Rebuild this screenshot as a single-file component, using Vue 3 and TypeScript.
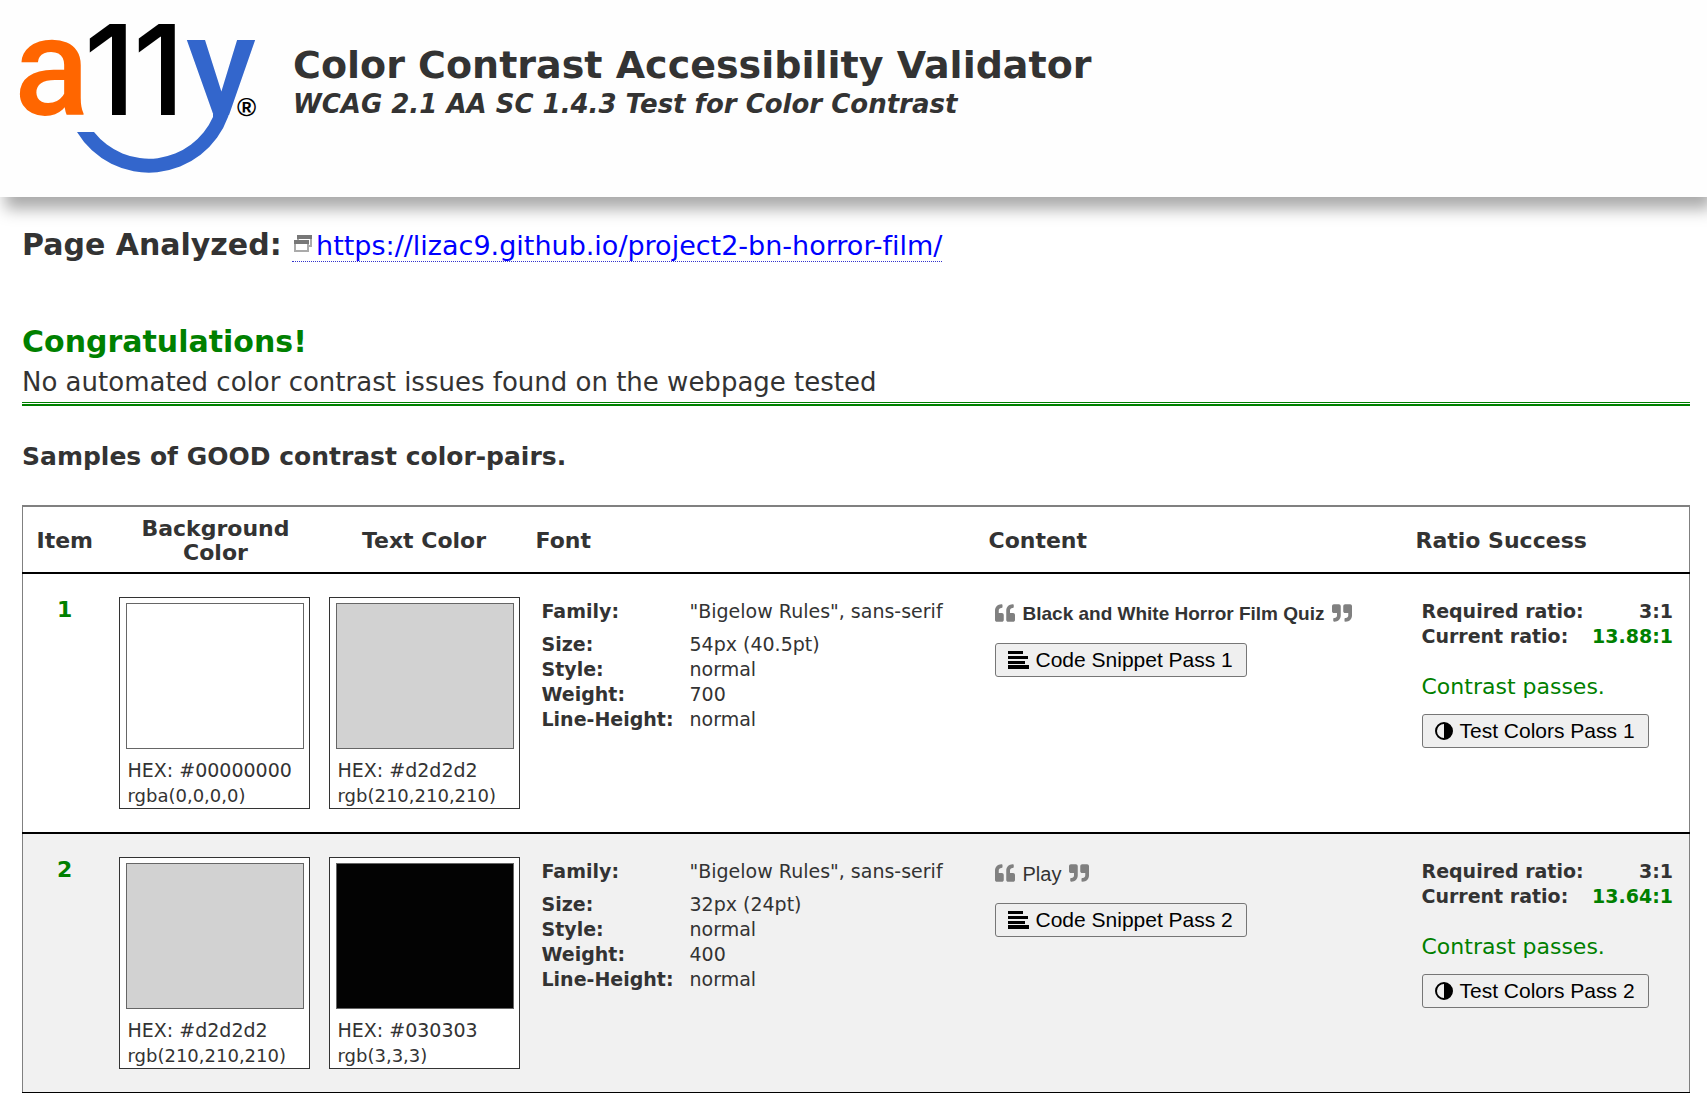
<script setup lang="ts">
interface Swatch {
  hex: string
  value: string
}

interface Sample {
  id: number
  background: Swatch
  text: Swatch
  family: string
  size: string
  style: string
  weight: string
  lineHeight: string
  content: string
  bold: boolean
  required: string
  current: string
}

const pageUrl = 'https://lizac9.github.io/project2-bn-horror-film/'

const samples: Sample[] = [
  {
    id: 1,
    background: { hex: '#00000000', value: 'rgba(0,0,0,0)' },
    text: { hex: '#d2d2d2', value: 'rgb(210,210,210)' },
    family: '"Bigelow Rules", sans-serif',
    size: '54px (40.5pt)',
    style: 'normal',
    weight: '700',
    lineHeight: 'normal',
    content: 'Black and White Horror Film Quiz',
    bold: true,
    required: '3:1',
    current: '13.88:1',
  },
  {
    id: 2,
    background: { hex: '#d2d2d2', value: 'rgb(210,210,210)' },
    text: { hex: '#030303', value: 'rgb(3,3,3)' },
    family: '"Bigelow Rules", sans-serif',
    size: '32px (24pt)',
    style: 'normal',
    weight: '400',
    lineHeight: 'normal',
    content: 'Play',
    bold: false,
    required: '3:1',
    current: '13.64:1',
  },
]

const swatches = (s: Sample): Swatch[] => [s.background, s.text]

const fontRows = (s: Sample): [string, string][] => [
  ['Family:', s.family],
  ['Size:', s.size],
  ['Style:', s.style],
  ['Weight:', s.weight],
  ['Line-Height:', s.lineHeight],
]

const quotePath =
  'M464 256h-80v-64c0-35.3 28.7-64 64-64h8c13.3 0 24-10.7 24-24V56c0-13.3-10.7-24-24-24h-8c-88.4 0-160 71.6-160 160v240c0 26.5 21.5 48 48 48h128c26.5 0 48-21.5 48-48V304c0-26.5-21.5-48-48-48zm-288 0H96v-64c0-35.3 28.7-64 64-64h8c13.3 0 24-10.7 24-24V56c0-13.3-10.7-24-24-24h-8C71.6 32 0 103.6 0 192v240c0 26.5 21.5 48 48 48h128c26.5 0 48-21.5 48-48V304c0-26.5-21.5-48-48-48z'
</script>

<template>
  <div class="page">
    <header class="banner">
      <svg class="logo" viewBox="0 0 240 152" role="img" aria-label="a11y">
        <defs>
          <clipPath id="above-smile"><rect x="160" y="0" width="80" height="93" /></clipPath>
        </defs>
        <text class="logo-a" x="-6" y="93">a</text>
        <text class="logo-one" x="64" y="93">1</text>
        <text class="logo-one" x="113" y="93">1</text>
        <text class="logo-y" x="166" y="93" clip-path="url(#above-smile)">y</text>
        <path class="smile" d="M57 110H74A70 70 0 0 0 193 95V92H209L208 95A84 84 0 0 1 57 110Z" />
        <text class="logo-reg" x="217" y="94">®</text>
      </svg>
      <div class="titles">
        <h1>Color Contrast Accessibility Validator</h1>
        <p class="subtitle">WCAG 2.1 AA SC 1.4.3 Test for Color Contrast</p>
      </div>
    </header>

    <main>
      <h2 class="analyzed">
        Page Analyzed:
        <a :href="pageUrl" target="_blank"
          ><svg class="window-icon" viewBox="0 0 18 17" aria-hidden="true">
            <rect x="4" y="1" width="13" height="10" fill="#fff" stroke="#aaa" stroke-width="2" />
            <rect x="3" y="0" width="15" height="4" fill="#777" />
            <rect x="1" y="6" width="13" height="10" fill="#fff" stroke="#aaa" stroke-width="2" />
            <rect x="0" y="5" width="15" height="4" fill="#777" /></svg
          >{{ pageUrl }}</a
        >
      </h2>

      <section class="result">
        <h2>Congratulations!</h2>
        <p>No automated color contrast issues found on the webpage tested</p>
      </section>

      <h3>Samples of GOOD contrast color-pairs.</h3>

      <table class="samples">
        <colgroup>
          <col class="col-item" />
          <col class="col-bg" />
          <col class="col-text" />
          <col class="col-font" />
          <col />
          <col class="col-ratio" />
        </colgroup>
        <thead>
          <tr>
            <th class="center" scope="col">Item</th>
            <th class="center" scope="col">Background<br />Color</th>
            <th class="center" scope="col">Text Color</th>
            <th scope="col">Font</th>
            <th scope="col">Content</th>
            <th scope="col">Ratio Success</th>
          </tr>
        </thead>
        <tbody>
          <tr v-for="s in samples" :key="s.id">
            <td class="item">{{ s.id }}</td>
            <td v-for="(w, i) in swatches(s)" :key="i">
              <div class="card">
                <div class="fill" :style="{ background: w.hex }"></div>
                <div class="hex">HEX: {{ w.hex }}</div>
                <div class="rgb">{{ w.value }}</div>
              </div>
            </td>
            <td>
              <table class="details">
                <tbody>
                  <tr v-for="[label, value] in fontRows(s)" :key="label">
                    <th scope="row">{{ label }}</th>
                    <td>{{ value }}</td>
                  </tr>
                </tbody>
              </table>
            </td>
            <td>
              <div class="inset">
                <div class="quote" :class="{ bold: s.bold }">
                  <svg viewBox="0 32 512 448" aria-hidden="true"><path :d="quotePath" /></svg>
                  <span>{{ s.content }}</span>
                  <svg viewBox="0 32 512 448" aria-hidden="true">
                    <path :d="quotePath" transform="rotate(180 256 256)" />
                  </svg>
                </div>
                <button type="button">
                  <svg class="lines-icon" viewBox="0 0 22 18" aria-hidden="true">
                    <path d="M0 0h15v3H0zM0 5h20v3H0zM0 10h17v3H0zM0 14h21v4H0z" /></svg
                  >Code Snippet Pass {{ s.id }}
                </button>
              </div>
            </td>
            <td>
              <div class="inset">
                <dl>
                  <div><dt>Required ratio:</dt><dd>{{ s.required }}</dd></div>
                  <div><dt>Current ratio:</dt><dd class="good">{{ s.current }}</dd></div>
                </dl>
                <p class="passes">Contrast passes.</p>
                <button type="button">
                  <svg class="contrast-icon" viewBox="0 0 18 18" aria-hidden="true">
                    <circle cx="9" cy="9" r="8" fill="none" stroke="#000" stroke-width="2" />
                    <path d="M9 1a8 8 0 0 1 0 16z" /></svg
                  >Test Colors Pass {{ s.id }}
                </button>
              </div>
            </td>
          </tr>
        </tbody>
      </table>
    </main>
  </div>
</template>

<style>
body {
  margin: 0;
  background: #fff;
}
</style>

<style scoped>
.page {
  color: #333;
  font-family: Verdana, 'DejaVu Sans', sans-serif;
  font-variant-ligatures: none;
  overflow-x: hidden;
}

h1,
h2,
h3,
p,
dl,
dd {
  margin: 0;
}

.banner {
  display: flex;
  gap: 33px;
  height: 175px;
  padding: 22px 20px 0;
  background: #fefefe;
  box-shadow: 5px 12px 15px #aaa;
}

.logo {
  width: 240px;
  height: 152px;
  overflow: visible;
}

.logo-a {
  font: 500 140px Roboto, sans-serif;
  fill: #f60;
}

.logo-one {
  font: 500 125px Inter, sans-serif;
  fill: #000;
}

.logo-y {
  font: 500 143px Roboto, sans-serif;
  fill: #36c;
}

.logo-reg {
  font: bold 26px 'Liberation Sans', sans-serif;
  fill: #000;
}

.smile {
  fill: #36c;
}

.titles {
  padding-top: 20px;
}

h1 {
  font-size: 38px;
  line-height: 46px;
}

.subtitle {
  font-size: 26px;
  font-weight: bold;
  font-style: italic;
  line-height: 32px;
}

main {
  padding: 28px 17px 0 22px;
}

.analyzed {
  font-size: 30px;
  line-height: 40px;
}

.analyzed a {
  border-bottom: 1px dotted #33c;
  color: #00f;
  font-size: 27px;
  font-weight: normal;
  text-decoration: none;
}

.window-icon {
  width: 18px;
  height: 17px;
  margin: 0 4px 0 2px;
  vertical-align: 3px;
}

.result {
  margin-top: 56px;
  padding-bottom: 1px;
  border-bottom: 2px solid green;
}

.result h2 {
  color: green;
  font-size: 30px;
  line-height: 40px;
}

.result p {
  border-bottom: 1px solid green;
  font-size: 26px;
  line-height: 40px;
}

h3 {
  margin-top: 31px;
  font-size: 25px;
  line-height: 40px;
}

.samples {
  width: 100%;
  margin-top: 28px;
  border: 1px solid #808080;
  border-top-width: 2px;
  border-bottom-color: #000;
  border-collapse: collapse;
  table-layout: fixed;
}

.col-item {
  width: 88px;
}

.col-bg {
  width: 210px;
}

.col-text {
  width: 207px;
}

.col-font {
  width: 453px;
}

.col-ratio {
  width: 282px;
}

.samples > thead th {
  padding: 10px 8px 7px;
  font-size: 22px;
  line-height: 24px;
  text-align: left;
}

.samples > thead th.center {
  text-align: center;
}

.samples > tbody > tr {
  border-top: 2px solid #000;
}

.samples > tbody > tr:nth-child(even) {
  background: #f1f1f1;
}

.samples > tbody > tr > td {
  padding: 23px 8px;
  vertical-align: top;
}

.samples > tbody > tr > .item {
  padding-right: 12px;
  color: green;
  font-size: 22px;
  font-weight: bold;
  line-height: 26px;
  text-align: center;
}

.samples > thead th:first-child {
  padding-right: 12px;
}

.card {
  box-sizing: border-box;
  width: 191px;
  padding: 5px 5px 0;
  border: 1px solid #333;
  background: #fff;
}

.fill {
  box-sizing: border-box;
  height: 146px;
  margin: 0 0 9px 1px;
  border: 1px solid #666;
}

.hex,
.rgb {
  padding-left: 3px;
  font-size: 19px;
  line-height: 25px;
}

.rgb {
  font-size: 18px;
}

.details {
  margin: 2px 0 0 6px;
  border-spacing: 0;
  font-size: 19px;
  line-height: 25px;
}

.details th {
  width: 148px;
  padding: 0;
  text-align: left;
}

.details td {
  padding: 0;
}

.details tr:first-child > * {
  padding-bottom: 8px;
}

.inset {
  padding: 2px 8px 0 6px;
}

.quote {
  display: flex;
  align-items: center;
  gap: 8px;
  margin-bottom: 16px;
  padding-top: 2px;
  font-family: Arial, 'Liberation Sans', sans-serif;
  font-size: 20px;
  line-height: 26px;
}

.quote svg {
  width: 20px;
  height: 18px;
  margin-bottom: 3px;
  fill: #808080;
}

.bold {
  font-size: 19px;
  font-weight: bold;
}

button {
  display: flex;
  align-items: center;
  height: 34px;
  padding: 0 13px 0 12px;
  border: 1px solid #767676;
  border-radius: 3px;
  background: #efefef;
  color: #000;
  font-family: Arial, 'Liberation Sans', sans-serif;
  font-size: 21px;
  line-height: 24px;
}

.lines-icon {
  width: 22px;
  height: 18px;
  margin-right: 6px;
}

.contrast-icon {
  width: 18px;
  height: 18px;
  margin-right: 7px;
}

dl {
  font-size: 19px;
  font-weight: bold;
  line-height: 25px;
}

dl div {
  display: flex;
  justify-content: space-between;
}

.good {
  color: green;
}

.passes {
  margin: 22px 0 11px;
  color: green;
  font-size: 22px;
  line-height: 32px;
}
</style>
